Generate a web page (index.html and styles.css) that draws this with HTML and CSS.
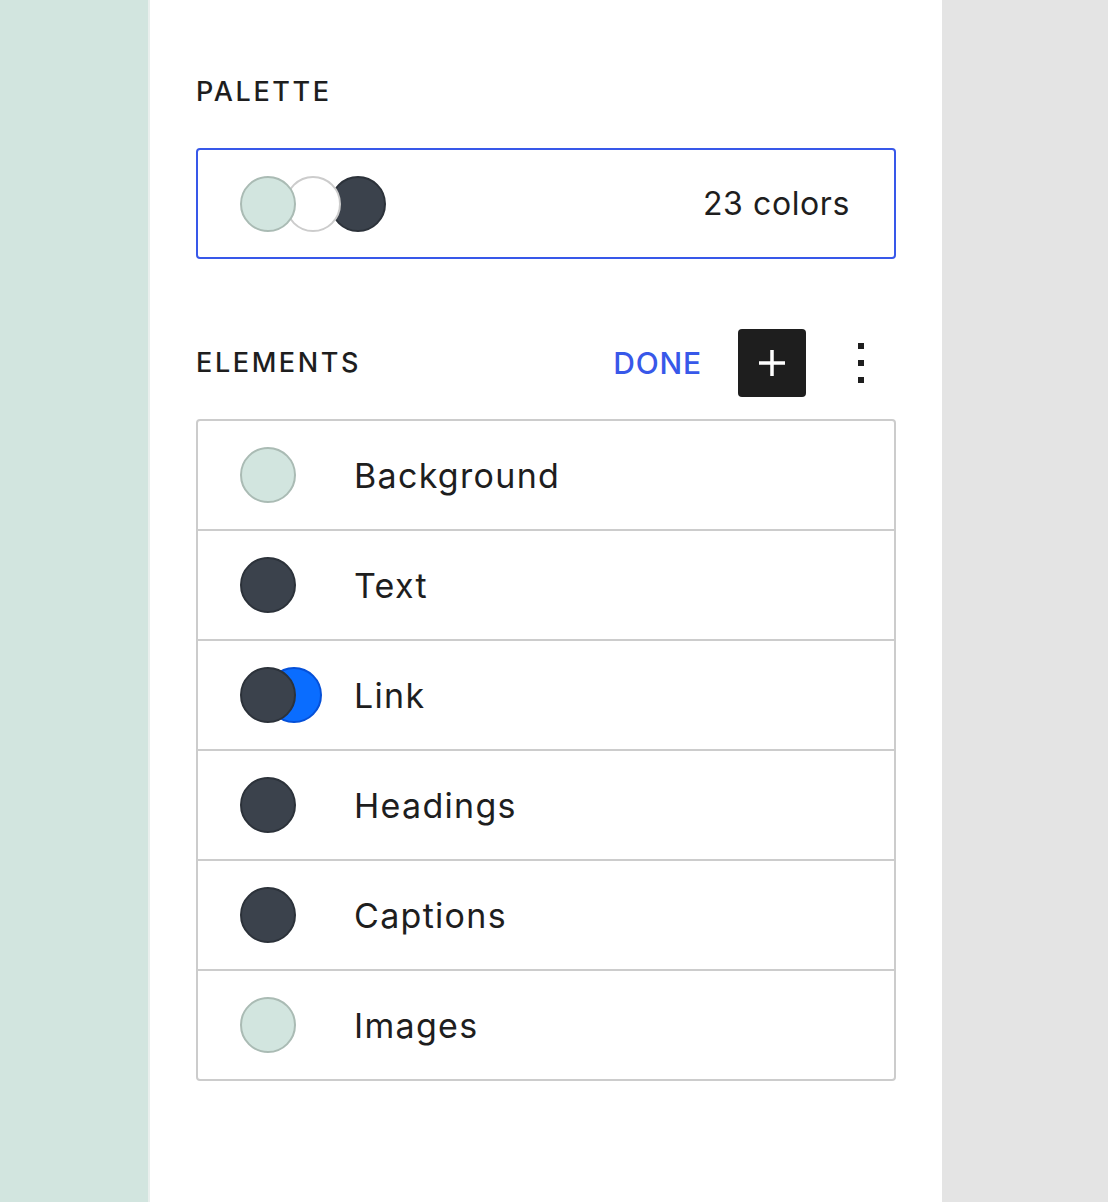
FILE: index.html
```html
<html>
<head>
    <title>Palette</title>
    <link rel="stylesheet" href="styles.css">
</head>
<body>
<div class="page">
    <div class="canvas"></div>
    <div class="panel">
        <h2 class="heading">Palette</h2>
        <div class="palette">
            <div class="stack">
                <span class="dot mint"></span>
                <span class="dot white"></span>
                <span class="dot dark"></span>
            </div>
            <span class="count">23 colors</span>
        </div>

        <div class="elements-head">
            <h2 class="heading">Elements</h2>
            <div class="actions">
                <button class="done">Done</button>
                <button class="add">
                    <svg width="34" height="34" viewBox="0 0 34 34"><path d="M17 4v26M4 17h26" stroke="#fff" stroke-width="3.5"/></svg>
                </button>
                <button class="more">
                    <svg width="10" height="44" viewBox="0 0 10 44"><rect x="2" y="2" width="6" height="6" fill="#1e1e1e"/><rect x="2" y="19" width="6" height="6" fill="#1e1e1e"/><rect x="2" y="36" width="6" height="6" fill="#1e1e1e"/></svg>
                </button>
            </div>
        </div>

        <div class="list">
            <div class="row"><div class="stack"><span class="dot mint"></span></div><span class="name">Background</span></div>
            <div class="row"><div class="stack"><span class="dot dark"></span></div><span class="name">Text</span></div>
            <div class="row"><div class="stack link"><span class="dot dark"></span><span class="dot blue"></span></div><span class="name">Link</span></div>
            <div class="row"><div class="stack"><span class="dot dark"></span></div><span class="name">Headings</span></div>
            <div class="row"><div class="stack"><span class="dot dark"></span></div><span class="name">Captions</span></div>
            <div class="row"><div class="stack"><span class="dot mint"></span></div><span class="name">Images</span></div>
        </div>
    </div>
    <div class="side"></div>
</div>
</body>
</html>
```

FILE: styles.css
```css
body {
    margin: 0;
    font-family: Inter, 'Noto Sans', sans-serif;
    color: #1e1e1e;
}
.page {
    display: flex;
    height: 1202px;
}
.canvas {
    width: 148px;
    background: #d2e5df;
    border-right: 2px solid #e9efed;
}
.panel {
    width: 700px;
    padding: 71px 46px 0 46px;
    background: #fff;
}
.side {
    flex: 1;
    background: #e4e4e4;
}
.heading {
    margin: 0;
    font-size: 27px;
    font-weight: 500;
    text-transform: uppercase;
    letter-spacing: 2.6px;
    line-height: 42px;
}
.palette {
    margin-top: 35px;
    height: 107px;
    border: 2px solid #3858e9;
    border-radius: 4px;
    display: flex;
    align-items: center;
    justify-content: space-between;
    padding: 0 44px 0 42px;
}
.count {
    font-size: 32px;
    letter-spacing: 0.6px;
}
.stack {
    display: flex;
    align-items: center;
    width: 80px;
}
.dot {
    width: 52px;
    height: 52px;
    border-radius: 50%;
    border: 2px solid;
    flex: none;
}
.stack .dot + .dot {
    margin-left: -11px;
}
.mint {
    background: #d2e5df;
    border-color: #aabbb4;
    position: relative;
    z-index: 3;
}
.white {
    background: #fff;
    border-color: #cccccc;
    position: relative;
    z-index: 2;
}
.dark {
    background: #3b424c;
    border-color: #2c323a;
    position: relative;
    z-index: 1;
}
.palette .stack {
    width: auto;
}
.stack.link .dark {
    z-index: 2;
}
.stack.link .dot + .dot {
    margin-left: -30px;
}
.blue {
    background: #0a6dff;
    border-color: #0550d8;
    position: relative;
    z-index: 1;
}
.elements-head {
    margin-top: 70px;
    display: flex;
    align-items: center;
    justify-content: space-between;
}
.actions {
    display: flex;
    align-items: center;
}
button {
    border: 0;
    background: none;
    padding: 0;
    cursor: pointer;
    font-family: inherit;
}
.done {
    color: #3858e9;
    font-size: 30px;
    font-weight: 500;
    text-transform: uppercase;
    letter-spacing: 0.8px;
    margin-right: 36px;
}
.add {
    width: 68px;
    height: 68px;
    background: #1e1e1e;
    border-radius: 4px;
    display: flex;
    align-items: center;
    justify-content: center;
}
.more {
    width: 70px;
    height: 68px;
    margin-left: 20px;
    display: flex;
    align-items: center;
    justify-content: center;
}
.list {
    margin-top: 22px;
    border: 2px solid #cccccc;
    border-radius: 4px;
}
.row {
    height: 108px;
    display: flex;
    align-items: center;
    padding-left: 42px;
    border-top: 2px solid #cccccc;
}
.row:first-child {
    border-top: 0;
}
.row .stack {
    width: 114px;
}
.name {
    font-size: 34px;
    letter-spacing: 1.3px;
}
```
